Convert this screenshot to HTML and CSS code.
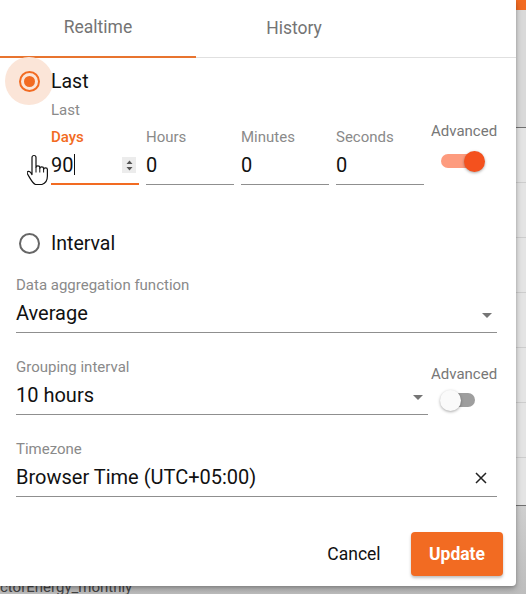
FILE: index.html
```html
<!DOCTYPE html>
<html lang="en">
<head>
    <meta charset="UTF-8">
    <meta name="viewport" content="width=device-width, initial-scale=1.0">
    <link rel="stylesheet" href="styles.css">
</head>
<body>
    <!-- page behind the popup -->
    <div class="page">
        <div class="page-bar"></div>
        <div class="page-head"></div>
        <div class="page-row"></div>
        <div class="page-row"></div>
        <div class="page-row"></div>
        <div class="page-row"></div>
        <div class="page-row"></div>
        <div class="page-row"></div>
        <div class="page-row dark"></div>
        <div class="page-foot">ctorEnergy_monthly</div>
    </div>

    <div class="dialog">
        <div class="tabs">
            <div class="tab active">Realtime</div>
            <div class="tab">History</div>
        </div>

        <div class="radio-row">
            <div class="radio-hit focused"><span class="radio checked"></span></div>
            <span class="radio-label">Last</span>
        </div>

        <div class="last-block">
            <div class="sub-label">Last</div>
            <div class="fields">
                <div class="field focused">
                    <label>Days</label>
                    <div class="input">90<span class="caret"></span>
                        <span class="spinner">
                            <svg width="7" height="11" viewBox="0 0 7 11"><path d="M3.5 0.5 L6.5 4 H0.5Z M3.5 10.5 L6.5 7 H0.5Z" fill="#555"/></svg>
                        </span>
                    </div>
                </div>
                <div class="field">
                    <label>Hours</label>
                    <div class="input">0</div>
                </div>
                <div class="field">
                    <label>Minutes</label>
                    <div class="input">0</div>
                </div>
                <div class="field">
                    <label>Seconds</label>
                    <div class="input">0</div>
                </div>
                <div class="advanced">
                    <div class="adv-label">Advanced</div>
                    <div class="toggle on"><span class="track"></span><span class="thumb"></span></div>
                </div>
            </div>
        </div>

        <div class="radio-row interval">
            <div class="radio-hit"><span class="radio"></span></div>
            <span class="radio-label">Interval</span>
        </div>

        <div class="form">
            <div class="field wide">
                <label>Data aggregation function</label>
                <div class="input">Average<span class="arrow"></span></div>
            </div>

            <div class="group-row">
                <div class="field wide grow">
                    <label>Grouping interval</label>
                    <div class="input">10 hours<span class="arrow"></span></div>
                </div>
                <div class="advanced">
                    <div class="adv-label">Advanced</div>
                    <div class="toggle"><span class="track"></span><span class="thumb"></span></div>
                </div>
            </div>

            <div class="field wide timezone">
                <label>Timezone</label>
                <div class="input">Browser Time (UTC+05:00)
                    <svg class="clear" width="12" height="12" viewBox="0 0 12 12"><path d="M1 1 L11 11 M11 1 L1 11" stroke="#222" stroke-width="1.5"/></svg>
                </div>
            </div>
        </div>

        <div class="actions">
            <button class="btn">Cancel</button>
            <button class="btn primary">Update</button>
        </div>

        <!-- mouse pointer over the days field -->
        <svg class="pointer" width="24" height="32" viewBox="0 0 24 32">
            <path d="M7 1.5c1.2 0 2 .9 2 2v10c0-1 .9-1.6 1.9-1.6s1.9.6 1.9 1.6v1c0-1 .9-1.6 1.9-1.6s1.9.6 1.9 1.6v1c0-1 .9-1.6 1.9-1.6s1.9.6 1.9 1.6v6.5c0 4.2-2.3 7.5-5.5 8.5h-6.5c-2-1-3.8-3.5-5.6-6.6l-2.4-4.2c-.6-1.1-.1-2.3 1-2.4 1-.1 1.9.6 2.6 1.7l1 1.6V3.5c0-1.1.8-2 2-2z" fill="#fff" stroke="#111" stroke-width="1.2" stroke-linejoin="round"/>
            <path d="M9 13.5v5M12.8 14.5v4M16.6 15.5v3" stroke="#111" stroke-width="1"/>
        </svg>
    </div>
</body>
</html>
```

FILE: styles.css
```css
:root {
    --accent: #f26b22;
    --accent-light: #fbe5d8;
    --text: rgba(0, 0, 0, 0.87);
    --muted: #8a8a8a;
    --line: #8f8f8f;
}

* {
    margin: 0;
    padding: 0;
    box-sizing: border-box;
}

body {
    width: 526px;
    height: 594px;
    overflow: hidden;
    position: relative;
    font-family: Roboto, 'Liberation Sans', sans-serif;
    background: #e4e4e4;
    color: var(--text);
}

/* background page */
.page {
    display: flex;
    flex-direction: column;
    height: 594px;
}

.page-bar {
    height: 10px;
    background: var(--accent);
}

.page-head {
    height: 118px;
    background: #d9d9d9;
    border-bottom: 1px solid #707070;
}

.page-row {
    height: 55px;
    border-bottom: 1px solid #cdcdcd;
}

.page-row.dark {
    height: 48px;
    border-bottom-color: #707070;
}

.page-foot {
    flex: 1;
    display: flex;
    align-items: flex-end;
    font-size: 15px;
    line-height: 14px;
    color: #444;
    background: linear-gradient(#cfcfcf, #bdbdbd);
}

/* popup */
.dialog {
    position: absolute;
    left: 0;
    top: 0;
    width: 516px;
    height: 586px;
    background: #fff;
    border-radius: 0 0 4px 0;
    box-shadow: 0 3px 6px rgba(0,0,0,0.25), 0 1px 3px rgba(0,0,0,0.15);
}

.tabs {
    display: flex;
    height: 58px;
    border-bottom: 1px solid #e0e0e0;
}

.tab {
    width: 196px;
    display: flex;
    align-items: center;
    justify-content: center;
    font-size: 17.5px;
    color: #747474;
    padding-bottom: 2px;
}

.tab.active {
    border-bottom: 2px solid #e8742f;
    margin-bottom: -1px;
}

.radio-row {
    display: flex;
    align-items: center;
    height: 46px;
    padding-left: 5px;
}

.radio-row.interval {
    margin-top: 35px;
}

.radio-hit {
    width: 48px;
    height: 48px;
    flex: none;
    border-radius: 50%;
    display: flex;
    align-items: center;
    justify-content: center;
}

.radio-hit.focused {
    background: var(--accent-light);
}

.radio {
    width: 21px;
    height: 21px;
    border-radius: 50%;
    border: 2px solid #666;
    display: flex;
    align-items: center;
    justify-content: center;
}

.radio.checked {
    border-color: var(--accent);
}

.radio.checked::after {
    content: '';
    width: 11px;
    height: 11px;
    border-radius: 50%;
    background: var(--accent);
}

.radio-label {
    font-size: 19.5px;
    margin-left: -2px;
    color: #111;
}

.last-block {
    padding-left: 51px;
}

.sub-label {
    font-size: 15px;
    line-height: 16px;
    color: var(--muted);
    margin-top: -2px;
}

.fields {
    display: flex;
    gap: 7px;
    margin-top: 11px;
}

.field {
    width: 88px;
}

.field label {
    display: block;
    font-size: 15px;
    line-height: 16px;
    color: var(--muted);
}

.field .input {
    position: relative;
    display: flex;
    align-items: center;
    height: 40px;
    padding-top: 1px;
    font-size: 20px;
    color: #111;
    border-bottom: 1px solid var(--line);
}

.field.focused label {
    color: var(--accent);
    font-weight: 500;
}

.field.focused .input {
    border-bottom: 2px solid var(--accent);
}

.caret {
    width: 1px;
    height: 21px;
    background: #111;
    margin-left: 1px;
}

.spinner {
    position: absolute;
    right: 3px;
    top: 12px;
    width: 14px;
    height: 16px;
    background: #ececec;
    display: flex;
    align-items: center;
    justify-content: center;
}

.advanced {
    display: flex;
    flex-direction: column;
    margin-top: -6px;
}

.adv-label {
    font-size: 15px;
    line-height: 16px;
    color: #777;
}

.toggle {
    position: relative;
    width: 46px;
    height: 24px;
    margin: 10px 0 0 9px;
}

.toggle .track {
    position: absolute;
    left: 1px;
    top: 5px;
    width: 34px;
    height: 14px;
    border-radius: 7px;
    background: #9e9e9e;
}

.toggle .thumb {
    position: absolute;
    left: 0;
    top: 2px;
    width: 21px;
    height: 21px;
    border-radius: 50%;
    background: #fafafa;
    box-shadow: 0 1px 3px rgba(0,0,0,0.35);
}

.toggle.on .track {
    background: #fd9b7e;
}

.toggle.on .thumb {
    left: 24px;
    background: #f4511e;
}

.form {
    padding: 0 19px 0 16px;
}

.field.wide {
    width: auto;
    margin-top: 11px;
}

.group-row,
.field.wide.timezone {
    margin-top: 26px;
}

.group-row .field.wide {
    margin-top: 0;
}

.group-row {
    display: flex;
    gap: 3px;
}

.grow {
    flex: 1;
}

.group-row .advanced {
    width: 66px;
    margin-top: 7px;
}

.group-row .toggle {
    margin-top: 6px;
}

.arrow {
    position: absolute;
    right: 5px;
    top: 20px;
    border-left: 5px solid transparent;
    border-right: 5px solid transparent;
    border-top: 5px solid #757575;
}

.clear {
    position: absolute;
    right: 10px;
    top: 15px;
}

.actions {
    display: flex;
    justify-content: flex-end;
    gap: 13px;
    padding-right: 13px;
    margin-top: 35px;
}

.btn {
    height: 44px;
    min-width: 88px;
    border: none;
    border-radius: 4px;
    background: transparent;
    font-family: Roboto, 'Liberation Sans', sans-serif;
    font-size: 17.5px;
    color: #111;
}

.btn.primary {
    width: 92px;
    background: var(--accent);
    color: #fff;
    font-weight: 700;
    box-shadow: 0 2px 3px rgba(0,0,0,0.25);
}

.pointer {
    position: absolute;
    left: 27px;
    top: 154px;
}
```
